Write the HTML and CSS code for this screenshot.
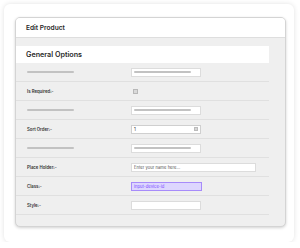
FILE: index.html
```html
<!DOCTYPE html>
<html>
<head>
<meta charset="utf-8">
<link rel="stylesheet" href="styles.css">
</head>
<body>
<div class="outer">
  <div class="card">
    <div class="card-header">Edit Product</div>
    <div class="card-body">
      <div class="section-title">General Options</div>
      <div class="row">
        <div class="label"><span class="ph-line"></span></div>
        <div class="field"><div class="input"><span class="ph-line in"></span></div></div>
      </div>
      <div class="row">
        <div class="label">Is Required:-</div>
        <div class="field"><span class="checkbox"></span></div>
      </div>
      <div class="row">
        <div class="label"><span class="ph-line"></span></div>
        <div class="field"><div class="input"><span class="ph-line in"></span></div></div>
      </div>
      <div class="row">
        <div class="label">Sort Order:-</div>
        <div class="field"><div class="input num"><span class="val">1</span><span class="spin"></span></div></div>
      </div>
      <div class="row">
        <div class="label"><span class="ph-line"></span></div>
        <div class="field"><div class="input"><span class="ph-line in"></span></div></div>
      </div>
      <div class="row">
        <div class="label">Place Holder:-</div>
        <div class="field"><div class="input wide"><span class="placeholder">Enter your name here...</span></div></div>
      </div>
      <div class="row">
        <div class="label">Class:-</div>
        <div class="field"><div class="input purple">input-device-id</div></div>
      </div>
      <div class="row">
        <div class="label">Style:-</div>
        <div class="field"><div class="input"></div></div>
      </div>
    </div>
  </div>
</div>
</body>
</html>
```
FILE: styles.css
```css
html, body {
  margin: 0;
  padding: 0;
  background: #ffffff;
  font-family: "Inter", "Liberation Sans", sans-serif;
}
.outer {
  margin: 4px 0 0 4px;
  width: 290px;
  height: 238px;
  box-sizing: border-box;
  padding: 13px 8px 15px 11px;
  background: #ffffff;
  border-radius: 6px;
  box-shadow: 0 0 5px rgba(0, 0, 0, 0.12);
}
.card {
  height: 210px;
  box-sizing: border-box;
  border: 1px solid #d4d4d4;
  border-radius: 5px;
  background: #efefef;
  box-shadow: 0 1px 3px rgba(0, 0, 0, 0.18);
  overflow: hidden;
  display: flex;
  flex-direction: column;
}
.card-header {
  height: 19px;
  background: #ffffff;
  border-bottom: 1px solid #dedede;
  display: flex;
  align-items: center;
  padding-left: 10px;
  font-size: 6.6px;
  font-weight: 600;
  color: #2a2a2a;
}
.card-body {
  padding: 8px 16px 0 0;
}
.section-title {
  height: 17px;
  background: #ffffff;
  display: flex;
  align-items: center;
  padding-left: 10px;
  font-size: 7.2px;
  font-weight: 600;
  color: #2a2a2a;
}
.row {
  height: 18px;
  border-bottom: 1px solid #e0e0e0;
  display: flex;
  align-items: center;
}
.label {
  width: 115px;
  flex: none;
  padding-left: 11px;
  box-sizing: border-box;
  font-size: 4.3px;
  font-weight: 600;
  color: #333;
  display: flex;
  align-items: center;
}
.ph-line {
  display: block;
  width: 47px;
  height: 1.5px;
  background: #c2c2c2;
  border-radius: 1px;
}
.ph-line.in {
  width: 57px;
}
.field {
  flex: 1;
  display: flex;
  align-items: center;
}
.input {
  width: 70px;
  height: 9px;
  box-sizing: border-box;
  background: #ffffff;
  border: 1px solid #dcdcdc;
  display: flex;
  align-items: center;
  padding-left: 2px;
  font-size: 4.2px;
  color: #444;
}
.input.wide {
  width: 125px;
}
.input.num {
  justify-content: space-between;
  padding-right: 2px;
  border-color: #cfcfcf;
}
.val {
  font-size: 4.5px;
  color: #333;
}
.spin {
  width: 4px;
  height: 4px;
  box-sizing: border-box;
  background: #d6d6d6;
  border: 1px solid #bbbbbb;
}
.placeholder {
  color: #555;
}
.input.purple {
  width: 71px;
  background: #ddd6fe;
  border: 1px solid #a78bfa;
  color: #7c4dff;
}
.checkbox {
  display: block;
  margin-left: 2px;
  width: 5px;
  height: 5px;
  box-sizing: border-box;
  background: #d9d9d9;
  border: 1px solid #b8b8b8;
}
```
